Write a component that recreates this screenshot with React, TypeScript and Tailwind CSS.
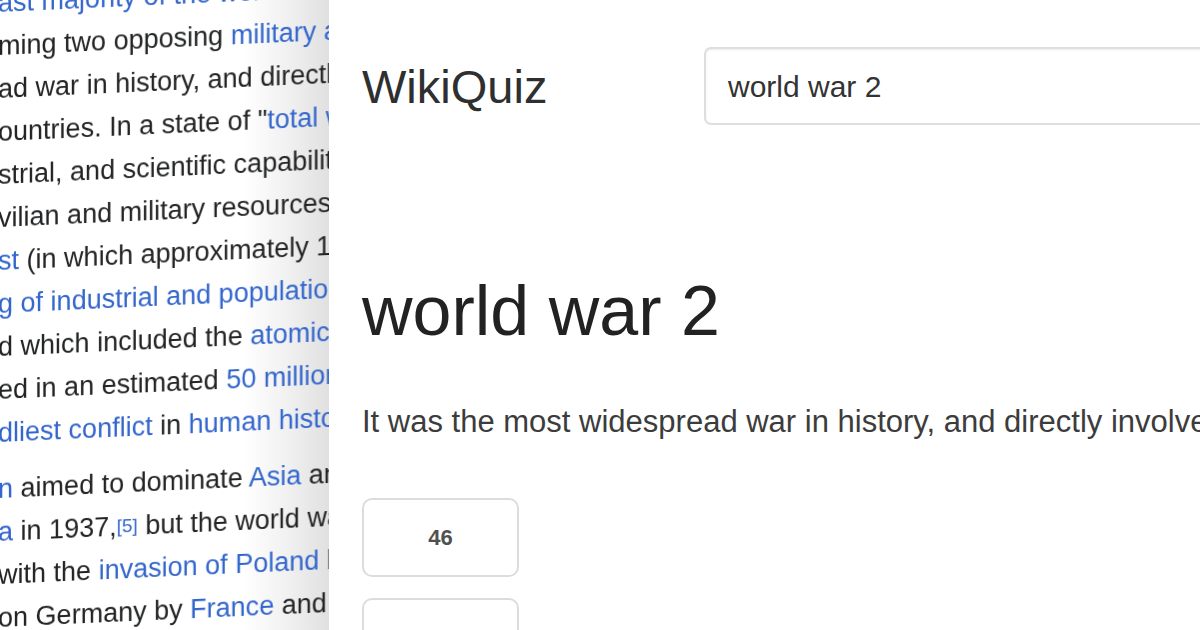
import React from "react";

type Seg = { t: string; link?: boolean; sup?: boolean };

// the Wikipedia excerpt behind the app, cropped at both edges
const lines: Seg[][] = [
  [{ t: "ast majority of the world's countries", link: true }],
  [{ t: "ming two opposing " }, { t: "military alliances", link: true }, { t: ": the Allies" }],
  [{ t: "ad war in history, and directly involved" }],
  [{ t: "ountries. In a state of \"" }, { t: "total war", link: true }, { t: "\", the" }],
  [{ t: "strial, and scientific capabilities behind" }],
  [{ t: "vilian and military resources. World" }],
  [{ t: "st", link: true }, { t: " (in which approximately 11 million" }],
  [{ t: "g of industrial and population centres", link: true }],
  [{ t: "d which included the " }, { t: "atomic bombings", link: true }],
  [{ t: "ed in an estimated " }, { t: "50 million to 85", link: true }],
  [{ t: "dliest conflict", link: true }, { t: " in " }, { t: "human history", link: true }],
];

const lines2: Seg[][] = [
  [{ t: "n", link: true }, { t: " aimed to dominate " }, { t: "Asia", link: true }, { t: " and the" }],
  [{ t: "a", link: true }, { t: " in 1937," }, { t: "[5]", link: true, sup: true }, { t: " but the world war is" }],
  [{ t: "with the " }, { t: "invasion of Poland", link: true }, { t: " by Germany" }],
  [{ t: "on Germany by " }, { t: "France", link: true }, { t: " and the United" }],
];

const Line = ({ segs }: { segs: Seg[] }) => (
  <div className="whitespace-nowrap h-[43px] leading-[43px]">
    {segs.map((s, i) =>
      s.sup ? (
        <sup key={i} className="text-[19px] text-[#3366cc] relative -top-[3px]">
          {s.t}
        </sup>
      ) : (
        <span key={i} className={s.link ? "text-[#3366cc]" : "text-[#222324]"}>
          {s.t}
        </span>
      )
    )}
  </div>
);

const WikiPanel = () => (
  <div className="w-[329px] h-[630px] shrink-0 overflow-hidden bg-[linear-gradient(to_right,#ffffff_0%,#ffffff_74%,#f0f0f0_88%,#e0e0e0_100%)]">
    <div
      className="w-[520px] -mt-[18px] -ml-[2px] origin-left skew-y-[-2.6deg] text-[27px] blur-[0.45px]"
      style={{ fontFamily: '"Liberation Sans", Arial, sans-serif' }}
    >
      {lines.map((l, i) => (
        <Line key={i} segs={l} />
      ))}
      <div className="h-[13px]" />
      {lines2.map((l, i) => (
        <Line key={i} segs={l} />
      ))}
    </div>
  </div>
);

const QuizPanel = () => (
  <div
    className="flex-1 h-[630px] overflow-hidden pl-[33px] bg-white"
    style={{ fontFamily: '"Liberation Sans", Arial, sans-serif' }}
  >
    <div className="flex items-center h-[78px] mt-[47px]">
      <div className="w-[342px] shrink-0 text-[47px] leading-[47px] text-[#2f2f2f]">WikiQuiz</div>
      <div className="w-[700px] shrink-0 h-[78px] flex items-center pl-[22px] border-2 border-[#dedede] rounded-[7px] shadow-[inset_0_1px_2px_rgba(0,0,0,0.08)] text-[30px] text-[#333]">
        world war 2
      </div>
    </div>

    <h1 className="mt-[151px] text-[70px] leading-[70px] text-[#222] whitespace-nowrap">world war 2</h1>

    <p className="mt-[60px] text-[31px] leading-[31px] text-[#3c3c3c] whitespace-nowrap">
      It was the most widespread war in history, and directly involved more than 100 million people
    </p>

    <div className="mt-[61px] flex flex-col gap-[21px]">
      <button className="w-[157px] h-[79px] border-2 border-[#dcdcdc] rounded-[10px] bg-white text-[22px] font-bold text-[#505050]">
        46
      </button>
      <button className="w-[157px] h-[79px] border-2 border-[#dcdcdc] rounded-[10px] bg-white text-[22px] font-bold text-[#505050]">
        33
      </button>
    </div>
  </div>
);

export default function App() {
  return (
    <div className="w-[1200px] h-[630px] flex overflow-hidden bg-white">
      <WikiPanel />
      <QuizPanel />
    </div>
  );
}
